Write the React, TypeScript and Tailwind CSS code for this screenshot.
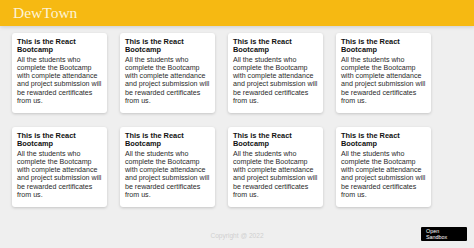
const cards = Array.from({ length: 8 }, (_, i) => i)

function Card() {
  return (
    <div className="h-[80px] rounded-[3px] bg-white px-[5px] pt-[5px] shadow-[0_1px_3px_rgba(0,0,0,0.18)]">
      <h2 className="text-[7.4px] font-bold leading-[8.3px] text-[#111]">
        This is the React Bootcamp
      </h2>
      <p className="mt-[1px] text-[7.1px] leading-[8.3px] text-[#2a2a2a]">
        All the students who complete the Bootcamp with complete attendance and project submission will
        be rewarded certificates from us.
      </p>
    </div>
  )
}

export default function App() {
  return (
    <div className="relative h-[248px] w-[474px] overflow-hidden bg-[#efefef] font-['Liberation_Sans',Arial,sans-serif]">
      {/* Header */}
      <header className="flex h-[26px] items-center bg-[#f6b912] px-[13px] shadow-[0_1px_4px_rgba(0,0,0,0.15)]">
        <h1 className="font-['Liberation_Serif',serif] text-[15.5px] leading-none text-[#fdf3d6]">DewTown</h1>
      </header>

      {/* Cards */}
      <main className="grid w-[431px] grid-cols-4 gap-x-[13px] gap-y-[14px] pl-[12px] pt-[7px]">
        {cards.map((i) => (
          <Card key={i} />
        ))}
      </main>

      {/* Footer */}
      <footer className="mt-[24px] text-center text-[6.6px] text-[#cfcfcf]">Copyright @ 2022</footer>

      {/* Sandbox badge */}
      <div className="absolute left-[421px] top-[227px] h-[14px] w-[46px] rounded-[1px] bg-black px-[5px] pt-[1px] text-[5.4px] leading-[6px] text-white">
        Open
        <br />
        Sandbox
      </div>
    </div>
  )
}
